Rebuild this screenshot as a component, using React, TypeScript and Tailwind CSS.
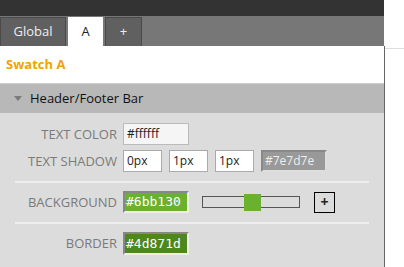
import React from 'react';

const font = { fontFamily: '"Open Sans", "Noto Sans", sans-serif' };
const mono = { fontFamily: '"DejaVu Sans Mono", monospace' };

function Label({ children }: { children: React.ReactNode }) {
  return (
    <div className="w-[123px] pr-[6px] text-right text-[13px] leading-none text-[#7a7a7a]">{children}</div>
  );
}

export default function App() {
  return (
    <div className="flex h-[267px] w-[404px] overflow-hidden bg-white" style={font}>
      <div className="flex w-[385px] flex-col">
        <div className="h-[16px] w-[384px] bg-[#333333]" />
        <div className="flex h-[30px] w-[384px] items-end gap-[2px] bg-[#777777]">
          <div className="flex h-[29px] w-[66px] items-center justify-center border border-b-0 border-[#4a4a4a] bg-[#606060] text-[13px] text-[#eeeeee]">
            Global
          </div>
          <div className="flex h-[29px] w-[35px] items-center justify-center bg-white text-[13px] text-[#222]">
            A
          </div>
          <div className="flex h-[29px] w-[37px] items-center justify-center border border-b-0 border-[#4a4a4a] bg-[#606060] text-[13px] text-[#eeeeee]">
            +
          </div>
        </div>
        <div className="flex flex-1 flex-col border-r border-[#666666]">
          <div className="flex h-[37px] items-center bg-white pl-[6px] text-[13px] font-bold text-[#f4a300]">
            Swatch A
          </div>
          <div className="h-[1px] bg-[#cccccc]" />
          <div className="flex h-[29px] items-center bg-[#b8b8b8] pl-[14px] text-[13px] text-[#111]">
            <svg width="8" height="5" viewBox="0 0 8 5" className="mr-[8px]">
              <path d="M0 0h8L4 5z" fill="#7a7a7a" />
            </svg>
            Header/Footer Bar
          </div>
          <div className="flex flex-1 flex-col bg-[#dcdcdc]">
            <div className="mt-[10px] flex items-center">
              <Label>TEXT COLOR</Label>
              <div className="flex h-[22px] w-[66px] items-center border border-[#bbbbbb] bg-[#f5f5f5] pl-[3px] text-[12px] text-[#222]">
                #ffffff
              </div>
            </div>
            <div className="mt-[5px] flex items-center">
              <Label>TEXT SHADOW</Label>
              <div className="flex gap-[7px]">
                {['0px', '1px', '1px'].map((v, i) => (
                  <div key={i} className="flex h-[22px] w-[39px] items-center border border-[#aaaaaa] bg-white pl-[3px] text-[12px] text-[#222]">
                    {v}
                  </div>
                ))}
                <div className="flex h-[22px] w-[66px] items-center border-2 border-[#dddddd] border-l-[#888] border-t-[#888] bg-[#999999] pl-[2px] text-[12px] text-[#eeeeee]">
                  #7e7d7e
                </div>
              </div>
            </div>
            <div className="mx-[15px] mt-[9px] h-[2px] bg-[#eeeeee]" />
            <div className="mt-[8px] flex items-center">
              <Label>BACKGROUND</Label>
              <div className="flex h-[22px] w-[66px] items-center border-2 border-[#eeeeee] border-l-[#888] border-t-[#888] bg-[#6bb130] pl-[1px] text-[13px] text-white" style={mono}>
                #6bb130
              </div>
              <div className="relative ml-[13px] h-[12px] w-[98px] border border-[#555555]">
                <div className="absolute left-[41px] top-[-3px] h-[17px] w-[17px] bg-[#6bb130]" />
              </div>
              <div className="ml-[14px] flex h-[21px] w-[21px] items-center justify-center border border-black text-[14px] font-bold leading-none text-[#222]">
                +
              </div>
            </div>
            <div className="mx-[15px] mt-[9px] h-[2px] bg-[#eeeeee]" />
            <div className="mt-[8px] flex items-center">
              <Label>BORDER</Label>
              <div className="flex h-[23px] w-[66px] items-center border-2 border-[#eeeeee] border-l-[#888] border-t-[#888] bg-[#4d871d] pl-[1px] text-[13px] text-white" style={mono}>
                #4d871d
              </div>
            </div>
          </div>
        </div>
      </div>
      <div className="flex-1 bg-white pt-[48px]">
        <div className="h-[1px] bg-[#dddddd]" />
      </div>
    </div>
  );
}
